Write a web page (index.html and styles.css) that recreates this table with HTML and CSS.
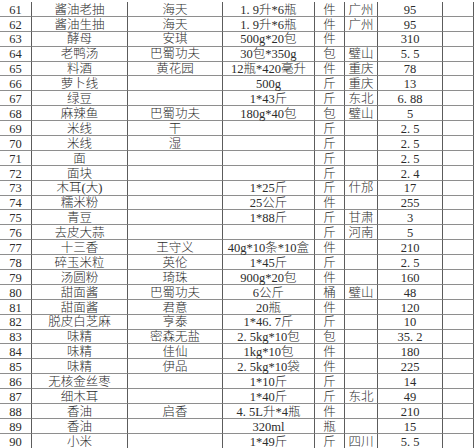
FILE: index.html
```html
<!DOCTYPE html>
<html lang="zh-CN">
<head>
<meta charset="utf-8">
<title>商品表</title>
<link rel="stylesheet" href="styles.css">
</head>
<body>
<div class="sheet">
<div class="c">61</div><div class="c">酱油老抽</div><div class="c">海天</div><div class="c">1<span class="pt">.</span>9升*6瓶</div><div class="c">件</div><div class="c">广州</div><div class="c">95</div><div class="c"></div>
<div class="c">62</div><div class="c">酱油生抽</div><div class="c">海天</div><div class="c">1<span class="pt">.</span>9升*6瓶</div><div class="c">件</div><div class="c">广州</div><div class="c">95</div><div class="c"></div>
<div class="c">63</div><div class="c">酵母</div><div class="c">安琪</div><div class="c">500g*20包</div><div class="c">件</div><div class="c"></div><div class="c">310</div><div class="c"></div>
<div class="c">64</div><div class="c">老鸭汤</div><div class="c">巴蜀功夫</div><div class="c">30包*350g</div><div class="c">包</div><div class="c">璧山</div><div class="c">5<span class="pt">.</span>5</div><div class="c"></div>
<div class="c">65</div><div class="c">料酒</div><div class="c">黄花园</div><div class="c">12瓶*420毫升</div><div class="c">件</div><div class="c">重庆</div><div class="c">78</div><div class="c"></div>
<div class="c">66</div><div class="c">萝卜线</div><div class="c"></div><div class="c">500g</div><div class="c">斤</div><div class="c">重庆</div><div class="c">13</div><div class="c"></div>
<div class="c">67</div><div class="c">绿豆</div><div class="c"></div><div class="c">1*43斤</div><div class="c">斤</div><div class="c">东北</div><div class="c">6<span class="pt">.</span>88</div><div class="c"></div>
<div class="c">68</div><div class="c">麻辣鱼</div><div class="c">巴蜀功夫</div><div class="c">180g*40包</div><div class="c">包</div><div class="c">璧山</div><div class="c">5</div><div class="c"></div>
<div class="c">69</div><div class="c">米线</div><div class="c">干</div><div class="c"></div><div class="c">斤</div><div class="c"></div><div class="c">2<span class="pt">.</span>5</div><div class="c"></div>
<div class="c">70</div><div class="c">米线</div><div class="c">湿</div><div class="c"></div><div class="c">斤</div><div class="c"></div><div class="c">2<span class="pt">.</span>5</div><div class="c"></div>
<div class="c">71</div><div class="c">面</div><div class="c"></div><div class="c"></div><div class="c">斤</div><div class="c"></div><div class="c">2<span class="pt">.</span>5</div><div class="c"></div>
<div class="c">72</div><div class="c">面块</div><div class="c"></div><div class="c"></div><div class="c">斤</div><div class="c"></div><div class="c">2<span class="pt">.</span>4</div><div class="c"></div>
<div class="c">73</div><div class="c">木耳(大)</div><div class="c"></div><div class="c">1*25斤</div><div class="c">斤</div><div class="c">什邡</div><div class="c">17</div><div class="c"></div>
<div class="c">74</div><div class="c">糯米粉</div><div class="c"></div><div class="c">25公斤</div><div class="c">件</div><div class="c"></div><div class="c">255</div><div class="c"></div>
<div class="c">75</div><div class="c">青豆</div><div class="c"></div><div class="c">1*88斤</div><div class="c">斤</div><div class="c">甘肃</div><div class="c">3</div><div class="c"></div>
<div class="c">76</div><div class="c">去皮大蒜</div><div class="c"></div><div class="c"></div><div class="c">斤</div><div class="c">河南</div><div class="c">5</div><div class="c"></div>
<div class="c">77</div><div class="c">十三香</div><div class="c">王守义</div><div class="c">40g*10条*10盒</div><div class="c">件</div><div class="c"></div><div class="c">210</div><div class="c"></div>
<div class="c">78</div><div class="c">碎玉米粒</div><div class="c">英伦</div><div class="c">1*45斤</div><div class="c">斤</div><div class="c"></div><div class="c">2<span class="pt">.</span>5</div><div class="c"></div>
<div class="c">79</div><div class="c">汤圆粉</div><div class="c">琦珠</div><div class="c">900g*20包</div><div class="c">件</div><div class="c"></div><div class="c">160</div><div class="c"></div>
<div class="c">80</div><div class="c">甜面酱</div><div class="c">巴蜀功夫</div><div class="c">6公斤</div><div class="c">桶</div><div class="c">璧山</div><div class="c">48</div><div class="c"></div>
<div class="c">81</div><div class="c">甜面酱</div><div class="c">君意</div><div class="c">20瓶</div><div class="c">件</div><div class="c"></div><div class="c">120</div><div class="c"></div>
<div class="c">82</div><div class="c">脱皮白芝麻</div><div class="c">亨泰</div><div class="c">1*46<span class="pt">.</span>7斤</div><div class="c">斤</div><div class="c"></div><div class="c">10</div><div class="c"></div>
<div class="c">83</div><div class="c">味精</div><div class="c">密森无盐</div><div class="c">2<span class="pt">.</span>5kg*10包</div><div class="c">包</div><div class="c"></div><div class="c">35<span class="pt">.</span>2</div><div class="c"></div>
<div class="c">84</div><div class="c">味精</div><div class="c">佳仙</div><div class="c">1kg*10包</div><div class="c">件</div><div class="c"></div><div class="c">180</div><div class="c"></div>
<div class="c">85</div><div class="c">味精</div><div class="c">伊品</div><div class="c">2<span class="pt">.</span>5kg*10袋</div><div class="c">件</div><div class="c"></div><div class="c">225</div><div class="c"></div>
<div class="c">86</div><div class="c">无核金丝枣</div><div class="c"></div><div class="c">1*10斤</div><div class="c">斤</div><div class="c"></div><div class="c">14</div><div class="c"></div>
<div class="c">87</div><div class="c">细木耳</div><div class="c"></div><div class="c">1*40斤</div><div class="c">斤</div><div class="c">东北</div><div class="c">49</div><div class="c"></div>
<div class="c">88</div><div class="c">香油</div><div class="c">启香</div><div class="c">4<span class="pt">.</span>5L升*4瓶</div><div class="c">件</div><div class="c"></div><div class="c">210</div><div class="c"></div>
<div class="c">89</div><div class="c">香油</div><div class="c"></div><div class="c">320ml</div><div class="c">瓶</div><div class="c"></div><div class="c">15</div><div class="c"></div>
<div class="c">90</div><div class="c">小米</div><div class="c"></div><div class="c">1*49斤</div><div class="c">斤</div><div class="c">四川</div><div class="c">5<span class="pt">.</span>5</div><div class="c"></div>
</div>
</body>
</html>
```
FILE: styles.css
```css
html, body {
  margin: 0;
  padding: 0;
  background: #ffffff;
}

body {
  padding-top: 2px;
  height: 448px;
  box-sizing: border-box;
  overflow: hidden;
}

.sheet {
  display: grid;
  grid-template-columns: 32px 96px 95px 92px 30px 33px 65px 31px;
  grid-auto-rows: 14.9px;
  width: 474px;
  font-family: "Liberation Serif", "Noto Sans CJK SC", serif;
  font-size: 12.5px;
  font-weight: 300;
  color: #2c2c2c;
}

.c {
  box-sizing: border-box;
  display: flex;
  align-items: center;
  justify-content: center;
  padding-top: 2px;
  border-right: 1px solid #5c5c5c;
  border-bottom: 1px solid #8e8e8e;
  line-height: 1;
  white-space: nowrap;
  overflow: visible;
}

.pt {
  letter-spacing: 0.25em;
}
```
